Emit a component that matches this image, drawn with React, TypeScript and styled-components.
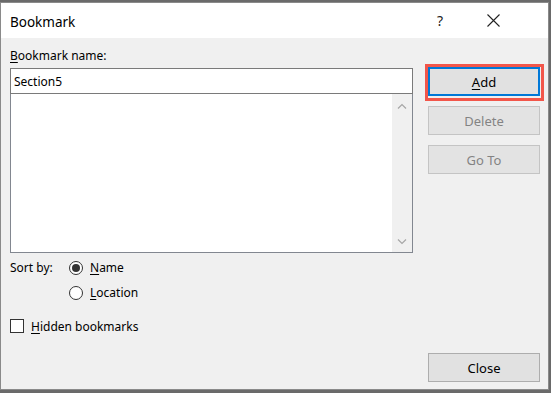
import * as React from "react";
import styled, { createGlobalStyle } from "styled-components";

const GlobalStyle = createGlobalStyle`
  html, body {
    margin: 0;
    padding: 0;
    background: #6a6a6a;
  }
  body {
    font-family: "Noto Sans", "Open Sans", "Liberation Sans", sans-serif;
    font-size: 12px;
    color: #000;
  }
`;

const Window = styled.div`
  box-sizing: border-box;
  margin-top: 2px;
  width: 549px;
  height: 388px;
  border: 1px solid #8a8a8a;
  background: #f0f0f0;
  display: flex;
  flex-direction: column;
`;

const TitleBar = styled.div`
  height: 35px;
  background: #fff;
  display: flex;
  align-items: center;
  padding-left: 9px;
  padding-right: 47px;
`;

const Title = styled.div`
  flex: 1;
  font-size: 13.5px;
  padding-top: 2px;
`;

const TitleButton = styled.div<{ $gap?: number }>`
  width: 16px;
  height: 16px;
  display: flex;
  align-items: center;
  justify-content: center;
  font-size: 14px;
  color: #222;
  margin-left: ${({ $gap }) => $gap ?? 0}px;
`;

const Body = styled.div`
  flex: 1;
  display: flex;
  padding: 10px 7px 7px 9px;
  gap: 15px;
`;

const LeftColumn = styled.div`
  width: 403px;
  display: flex;
  flex-direction: column;
`;

const RightColumn = styled.div`
  width: 112px;
  display: flex;
  flex-direction: column;
  padding-top: 19px;
`;

const Label = styled.div`
  line-height: 16px;
  height: 16px;
  margin-bottom: 4px;
`;

const Key = styled.span`
  text-decoration: underline;
  text-underline-offset: 2px;
`;

const NameInput = styled.div`
  box-sizing: border-box;
  height: 26px;
  border: 1px solid #7a7a7a;
  background: #fff;
  padding: 0 3px;
  display: flex;
  align-items: center;
`;

const ListBox = styled.div`
  box-sizing: border-box;
  height: 159px;
  border: 1px solid #828790;
  border-top: none;
  background: #fff;
  display: flex;
  justify-content: flex-end;
`;

const ScrollBar = styled.div`
  width: 20px;
  background: #f0f0f0;
  display: flex;
  flex-direction: column;
  justify-content: space-between;
  align-items: center;
  padding: 9px 0 7px;
`;

const SortRow = styled.div`
  display: flex;
  margin-top: 7px;
`;

const SortLabel = styled.div`
  width: 59px;
  line-height: 15px;
`;

const RadioGroup = styled.div`
  display: flex;
  flex-direction: column;
  gap: 10px;
`;

const Option = styled.div`
  display: flex;
  align-items: center;
  gap: 7px;
  height: 15px;
`;

const Radio = styled.div<{ $checked?: boolean }>`
  box-sizing: border-box;
  width: 14px;
  height: 14px;
  border: 1px solid #333;
  border-radius: 50%;
  background: #fff;
  display: flex;
  align-items: center;
  justify-content: center;
  &::after {
    content: "";
    width: 8px;
    height: 8px;
    border-radius: 50%;
    background: ${({ $checked }) => ($checked ? "#333" : "transparent")};
  }
`;

const CheckRow = styled.div`
  display: flex;
  align-items: center;
  gap: 7px;
  margin-top: 19px;
  height: 14px;
`;

const CheckBox = styled.div`
  box-sizing: border-box;
  width: 14px;
  height: 14px;
  border: 1px solid #333;
  background: #fff;
`;

const Button = styled.div<{ $disabled?: boolean; $focused?: boolean }>`
  box-sizing: border-box;
  position: relative;
  height: 29px;
  display: flex;
  align-items: center;
  justify-content: center;
  font-size: 13px;
  background: ${({ $disabled }) => ($disabled ? "#e3e3e3" : "#e1e1e1")};
  border: ${({ $focused, $disabled }) =>
    $focused ? "2px solid #0078d7" : $disabled ? "1px solid #c4c4c4" : "1px solid #adadad"};
  color: ${({ $disabled }) => ($disabled ? "#838383" : "#000")};
`;

const Highlight = styled.div`
  position: absolute;
  left: -5px;
  right: -6px;
  top: -5px;
  bottom: -7px;
  border: 3px solid #f2564a;
  pointer-events: none;
`;

const ButtonStack = styled.div`
  display: flex;
  flex-direction: column;
  gap: 10px;
`;

const Spacer = styled.div`
  flex: 1;
`;

function Chevron({ up }: { up?: boolean }) {
  return (
    <svg width="10" height="6" viewBox="0 0 10 6">
      <path
        d={up ? "M1 5.5 L5 1.5 L9 5.5" : "M1 0.5 L5 4.5 L9 0.5"}
        fill="none"
        stroke="#a6a6a6"
        strokeWidth="1.2"
      />
    </svg>
  );
}

export default function App() {
  return (
    <>
      <GlobalStyle />
      <Window>
        <TitleBar>
          <Title>Bookmark</Title>
          <TitleButton>?</TitleButton>
          <TitleButton $gap={37}>
            <svg width="13" height="13" viewBox="0 0 13 13">
              <path d="M0.5 0.5 L12.5 12.5 M12.5 0.5 L0.5 12.5" stroke="#222" strokeWidth="1.1" />
            </svg>
          </TitleButton>
        </TitleBar>
        <Body>
          <LeftColumn>
            <Label>
              <Key>B</Key>ookmark name:
            </Label>
            <NameInput>Section5</NameInput>
            <ListBox>
              <ScrollBar>
                <Chevron up />
                <Chevron />
              </ScrollBar>
            </ListBox>
            <SortRow>
              <SortLabel>Sort by:</SortLabel>
              <RadioGroup>
                <Option>
                  <Radio $checked />
                  <span>
                    <Key>N</Key>ame
                  </span>
                </Option>
                <Option>
                  <Radio />
                  <span>
                    <Key>L</Key>ocation
                  </span>
                </Option>
              </RadioGroup>
            </SortRow>
            <CheckRow>
              <CheckBox />
              <span>
                <Key>H</Key>idden bookmarks
              </span>
            </CheckRow>
          </LeftColumn>
          <RightColumn>
            <ButtonStack>
              <Button $focused>
                <span>
                  <Key>A</Key>dd
                </span>
                <Highlight />
              </Button>
              <Button $disabled>Delete</Button>
              <Button $disabled>Go To</Button>
            </ButtonStack>
            <Spacer />
            <Button>Close</Button>
          </RightColumn>
        </Body>
      </Window>
    </>
  );
}
